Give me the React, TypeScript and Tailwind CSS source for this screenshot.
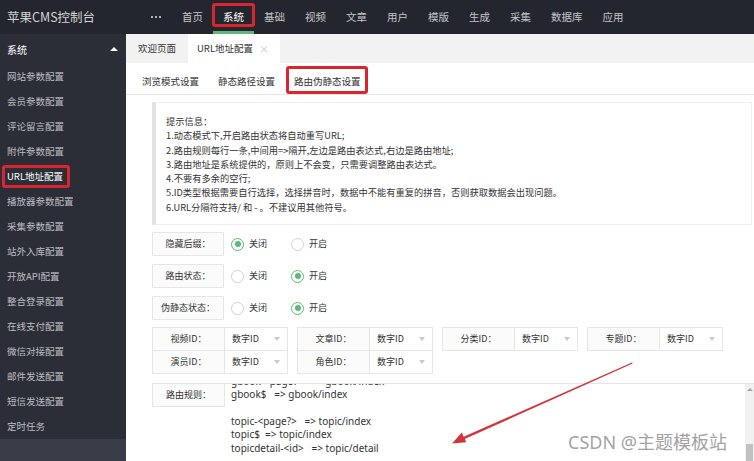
const NAV = ["首页", "系统", "基础", "视频", "文章", "用户", "模版", "生成", "采集", "数据库", "应用"];

const SIDE_ITEMS = [
  "网站参数配置",
  "会员参数配置",
  "评论留言配置",
  "附件参数配置",
  "URL地址配置",
  "播放器参数配置",
  "采集参数配置",
  "站外入库配置",
  "开放API配置",
  "整合登录配置",
  "在线支付配置",
  "微信对接配置",
  "邮件发送配置",
  "短信发送配置",
  "定时任务",
];

const TIPS = [
  "提示信息：",
  "1.动态模式下,开启路由状态将自动重写URL;",
  "2.路由规则每行一条,中间用=>隔开,左边是路由表达式,右边是路由地址;",
  "3.路由地址是系统提供的，原则上不会变，只需要调整路由表达式。",
  "4.不要有多余的空行;",
  "5.ID类型根据需要自行选择，选择拼音时，数据中不能有重复的拼音，否则获取数据会出现问题。",
  "6.URL分隔符支持/ 和 - 。不建议用其他符号。",
];

const RULES = [
  "gbook-<page?>   => gbook/index",
  "gbook$   => gbook/index",
  "",
  "topic-<page?>   => topic/index",
  "topic$  => topic/index",
  "topicdetail-<id>   => topic/detail",
  "",
];

// red annotation frame drawn over the screenshot
function Mark({ className }: { className: string }) {
  return (
    <span
      className={`pointer-events-none absolute rounded-[3px] border-[3px] border-[#d9262e] ${className}`}
    />
  );
}

function Label({ text, w = "w-[72px]" }: { text: string; w?: string }) {
  return (
    <div
      className={`flex h-[24px] ${w} shrink-0 items-center justify-center border border-[#e6e6e6] bg-[#fbfbfb] text-[9px] text-[#333]`}
    >
      {text}
    </div>
  );
}

function Radio({ on, label }: { on: boolean; label: string }) {
  return (
    <span className="flex items-center gap-[5px]">
      <span
        className={`flex h-[13px] w-[13px] items-center justify-center rounded-full border ${
          on ? "border-[#5fb878]" : "border-[#d2d2d2]"
        }`}
      >
        {on && <span className="h-[6px] w-[6px] rounded-full bg-[#5fb878]" />}
      </span>
      <span className="text-[9px] text-[#333]">{label}</span>
    </span>
  );
}

function RadioRow({ label, on }: { label: string; on: "off" | "on" }) {
  return (
    <div className="flex h-[24px] items-center">
      <Label text={label} />
      <div className="ml-[7px] flex gap-[24px]">
        <Radio on={on === "off"} label="关闭" />
        <Radio on={on === "on"} label="开启" />
      </div>
    </div>
  );
}

function IdSelect({ label }: { label: string }) {
  return (
    <div className="flex">
      <Label text={label} w="w-[73px]" />
      <div className="flex h-[24px] w-[63px] items-center justify-between border border-l-0 border-[#e6e6e6] bg-white pl-[7px] pr-[7px] text-[9px] text-[#333]">
        数字ID
        <span className="h-0 w-0 border-x-[3.5px] border-t-[4px] border-x-transparent border-t-[#c9c9c9]" />
      </div>
    </div>
  );
}

export default function App() {
  return (
    <div className="relative flex h-[461px] w-[754px] flex-col overflow-hidden bg-white font-['Noto_Sans_CJK_SC',sans-serif]">
      <header className="flex h-[34px] shrink-0 items-center bg-[#23262e]">
        <div className="w-[140px] pl-[7px] text-[12.5px] text-[#d4d4d4]">苹果CMS控制台</div>
        <div className="flex w-[32px] items-center justify-center gap-[1.5px]">
          <span className="h-[2.5px] w-[2.5px] rounded-full bg-[#e4e4e4]" />
          <span className="h-[2.5px] w-[2.5px] rounded-full bg-[#e4e4e4]" />
          <span className="h-[2.5px] w-[2.5px] rounded-full bg-[#e4e4e4]" />
        </div>
        <nav className="flex h-full">
          {NAV.map((n) => (
            <div
              key={n}
              className={`relative flex h-full items-center px-[10px] text-[10.5px] ${
                n === "系统" ? "text-white" : "text-[#c4c5c8]"
              }`}
            >
              {n}
              {n === "系统" && (
                <>
                  <span className="absolute bottom-0 left-0 h-[3px] w-full bg-[#5fb878]" />
                  <Mark className="-left-[1px] top-[3px] h-[24px] w-[43px]" />
                </>
              )}
            </div>
          ))}
        </nav>
      </header>

      <div className="flex min-h-0 flex-1">
        <aside className="flex w-[126px] shrink-0 flex-col bg-[#393c46]">
          <div className="bg-[#2b2e37]">
            <div className="flex h-[30px] items-center justify-between pl-[7px] pr-[8px] text-[10px] text-white">
              系统
              <span className="h-0 w-0 border-x-[4px] border-b-[4px] border-x-transparent border-b-white" />
            </div>
            {SIDE_ITEMS.map((item) => {
              const active = item === "URL地址配置";
              return (
                <div
                  key={item}
                  className={`relative flex h-[25px] items-center pl-[7px] text-[9.5px] ${
                    active ? "text-white" : "text-[#bdbec2]"
                  }`}
                >
                  {item}
                  {active && <Mark className="left-[2px] top-[1px] h-[23px] w-[68px]" />}
                </div>
              );
            })}
          </div>
        </aside>

        <main className="flex min-w-0 flex-1 flex-col bg-white">
          <div className="flex h-[29px] shrink-0 bg-[#f2f2f2] text-[9.5px] text-[#333]">
            <div className="flex items-center px-[12px]">欢迎页面</div>
            <div className="flex items-center gap-[6px] bg-white pl-[9px] pr-[11px]">
              URL地址配置
              <span className="text-[10px] text-[#c8c8c8]">×</span>
            </div>
          </div>

          <div className="relative flex h-[32px] shrink-0 items-end gap-[19px] border-b border-[#e6e6e6] pb-[6px] pl-[16px] text-[9.5px] text-[#333]">
            <span>浏览模式设置</span>
            <span>静态路径设置</span>
            <span>路由伪静态设置</span>
            <Mark className="left-[160px] top-[3px] h-[28px] w-[82px]" />
          </div>

          <div className="pl-[26px] pt-[7px]">
            <div className="mr-[2px] border border-l-[4px] border-[#eeeeee] border-l-[#e2e2e2] pb-[10px] pl-[10px] pt-[11px] text-[9.25px] leading-[14.3px] text-[#333]">
              {TIPS.map((t) => (
                <div key={t}>{t}</div>
              ))}
            </div>

            <div className="mt-[7px] flex flex-col gap-[8px]">
              <RadioRow label="隐藏后缀：" on="off" />
              <RadioRow label="路由状态：" on="on" />
              <RadioRow label="伪静态状态：" on="on" />
            </div>

            <div className="mt-[7px] flex flex-col">
              <div className="flex gap-[9px]">
                <IdSelect label="视频ID：" />
                <IdSelect label="文章ID：" />
                <IdSelect label="分类ID：" />
                <IdSelect label="专题ID：" />
              </div>
              <div className="-mt-px flex gap-[9px]">
                <IdSelect label="演员ID：" />
                <IdSelect label="角色ID：" />
              </div>
            </div>

            <div className="mt-[9px] flex items-start">
              <Label text="路由规则：" w="w-[73px]" />
              <div className="flex h-[100px] flex-1 border border-r-0 border-l-0 border-[#e6e6e6]">
                <div className="min-w-0 flex-1 overflow-hidden pl-[6px]">
                  <div className="-mt-[9px] whitespace-pre font-['Noto_Sans',sans-serif] text-[10px] leading-[13.3px] text-[#333]">
                    {RULES.map((r, i) => (
                      <div key={i} className="h-[13.3px]">
                        {r}
                      </div>
                    ))}
                  </div>
                </div>
                <div className="flex w-[9px] flex-col items-center bg-[#f1f1f1]">
                  <span className="mt-[4px] h-0 w-0 border-x-[3px] border-b-[3px] border-x-transparent border-b-[#a3a3a3]" />
                  <span className="mt-[53px] h-[40px] w-[7px] bg-[#c1c1c1]" />
                </div>
              </div>
            </div>
          </div>
        </main>
      </div>

      {/* annotation arrow */}
      <svg className="pointer-events-none absolute left-0 top-0" width="754" height="461" viewBox="0 0 754 461">
        <polygon points="632,362.5 632.6,363.6 463.5,439.6 462.5,437.3" fill="#d1343b" />
        <polygon points="452,443.5 466.2,442.2 461.8,432.6" fill="#d1343b" />
      </svg>

      <div className="pointer-events-none absolute left-[568px] top-[433px] whitespace-nowrap font-['Noto_Sans','Noto_Sans_CJK_SC',sans-serif] text-[18px] leading-none text-[#a3a3a3]">
        CSDN @主题模板站
      </div>
    </div>
  );
}
